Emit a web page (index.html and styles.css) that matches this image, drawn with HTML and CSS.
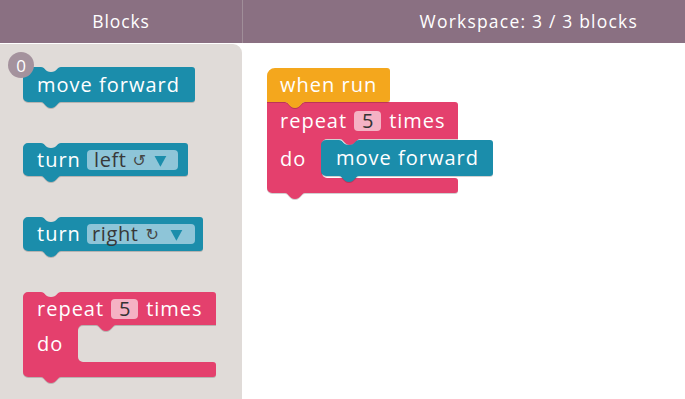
FILE: index.html
```html
<!DOCTYPE html>
<html>
<head>
<meta charset="utf-8">
<link rel="stylesheet" href="styles.css">
</head>
<body>
<div class="app">
  <div class="head head-blocks">Blocks</div>
  <div class="head head-ws">Workspace: 3 / 3 blocks</div>

  <aside class="flyout">
    <div class="block teal b-move">
      <svg class="shape" width="172" height="35" viewBox="0 0 172 35"><path d="M0,5 a5,5 0 0 1 5,-5 H18 c4,0 4,5 10,5 c6,0 6,-5 10,-5 H169 a3,3 0 0 1 3,3 V32 a3,3 0 0 1 -3,3 H38 c-4,0 -4,6 -10,6 c-6,0 -6,-6 -10,-6 H5 a5,5 0 0 1 -5,-5 Z"/></svg>
      <span class="label">move forward</span>
      <span class="badge">0</span>
    </div>

    <div class="block teal b-left">
      <svg class="shape" width="165" height="33" viewBox="0 0 165 33"><path d="M0,5 a5,5 0 0 1 5,-5 H18 c4,0 4,5 10,5 c6,0 6,-5 10,-5 H162 a3,3 0 0 1 3,3 V30 a3,3 0 0 1 -3,3 H38 c-4,0 -4,6 -10,6 c-6,0 -6,-6 -10,-6 H5 a5,5 0 0 1 -5,-5 Z"/></svg>
      <span class="label">turn</span>
      <span class="dropdown dd-left"><span class="dd-text">left</span><span class="rot">↺</span><span class="tri">▼</span></span>
    </div>

    <div class="block teal b-right">
      <svg class="shape" width="180" height="34" viewBox="0 0 180 34"><path d="M0,5 a5,5 0 0 1 5,-5 H18 c4,0 4,5 10,5 c6,0 6,-5 10,-5 H177 a3,3 0 0 1 3,3 V31 a3,3 0 0 1 -3,3 H38 c-4,0 -4,6 -10,6 c-6,0 -6,-6 -10,-6 H5 a5,5 0 0 1 -5,-5 Z"/></svg>
      <span class="label">turn</span>
      <span class="dropdown dd-right"><span class="dd-text">right</span><span class="rot">↻</span><span class="tri">▼</span></span>
    </div>

    <div class="cblock pink fly-repeat">
      <svg class="shape" width="193" height="85" viewBox="0 0 193 85"><path d="M0,5 a5,5 0 0 1 5,-5 H18 c4,0 4,5 10,5 c6,0 6,-5 10,-5 H190 a3,3 0 0 1 3,3 V33 H93 c-4,0 -4,6 -10,6 c-6,0 -6,-6 -10,-6 H60 a5,5 0 0 0 -5,5 V65 a5,5 0 0 0 5,5 H190 a3,3 0 0 1 3,3 V82 a3,3 0 0 1 -3,3 H38 c-4,0 -4,6 -10,6 c-6,0 -6,-6 -10,-6 H5 a5,5 0 0 1 -5,-5 Z"/></svg>
      <div class="row row-top"><span class="label">repeat</span><span class="num">5</span><span class="label">times</span></div>
      <div class="row row-do"><span class="label">do</span></div>
      <div class="row row-foot"></div>
    </div>
  </aside>

  <main class="workspace">
    <div class="stack">
      <div class="block orange b-run">
        <svg class="shape" width="123" height="34" viewBox="0 0 123 34"><path d="M0,8 a8,8 0 0 1 8,-8 H120 a3,3 0 0 1 3,3 V31 a3,3 0 0 1 -3,3 H38 c-4,0 -4,6 -10,6 c-6,0 -6,-6 -10,-6 H0 Z"/></svg>
        <span class="label">when run</span>
      </div>
      <div class="cblock pink ws-repeat">
        <svg class="shape" width="191" height="91" viewBox="0 0 191 91"><path d="M0,0 H18 c4,0 4,5 10,5 c6,0 6,-5 10,-5 H188 a3,3 0 0 1 3,3 V37 H93 c-4,0 -4,6 -10,6 c-6,0 -6,-6 -10,-6 H60 a5,5 0 0 0 -5,5 V71 a5,5 0 0 0 5,5 H188 a3,3 0 0 1 3,3 V88 a3,3 0 0 1 -3,3 H38 c-4,0 -4,6 -10,6 c-6,0 -6,-6 -10,-6 H5 a5,5 0 0 1 -5,-5 Z"/></svg>
        <div class="row row-top"><span class="label">repeat</span><span class="num">5</span><span class="label">times</span></div>
        <div class="row row-do">
          <span class="label">do</span>
          <div class="block teal b-inner">
            <svg class="shape" width="172" height="36" viewBox="0 0 172 36"><path d="M0,5 a5,5 0 0 1 5,-5 H18 c4,0 4,5 10,5 c6,0 6,-5 10,-5 H169 a3,3 0 0 1 3,3 V33 a3,3 0 0 1 -3,3 H38 c-4,0 -4,6 -10,6 c-6,0 -6,-6 -10,-6 H5 a5,5 0 0 1 -5,-5 Z"/></svg>
            <span class="label">move forward</span>
          </div>
        </div>
        <div class="row row-foot"></div>
      </div>
    </div>
  </main>
</div>
</body>
</html>
```

FILE: styles.css
```css
* { box-sizing: border-box; }

html, body {
  margin: 0;
  padding: 0;
  background: #ffffff;
}

body {
  font-family: "Open Sans", "Lato", sans-serif;
  width: 685px;
  height: 399px;
  overflow: hidden;
}

.app {
  display: grid;
  grid-template-columns: 243px 1fr;
  grid-template-rows: 43px 1fr;
  height: 399px;
}

.head {
  background: #8a7082;
  color: #ffffff;
  font-size: 17.5px;
  letter-spacing: 0.9px;
  display: flex;
  align-items: center;
  padding-bottom: 1px;
}

.head-blocks {
  justify-content: center;
  border-right: 1px solid #a08e99;
}

.head-ws {
  justify-content: flex-end;
  padding-right: 47px;
  letter-spacing: 1.2px;
}

.flyout {
  background: #e0dbd8;
  border-top-right-radius: 9px;
  margin-top: 1px;
  margin-right: 1px;
  padding: 23px 0 0 23px;
  display: flex;
  flex-direction: column;
  align-items: flex-start;
  gap: 41px;
}

.workspace {
  position: relative;
  background: #ffffff;
}

.stack {
  position: absolute;
  left: 24px;
  top: 25px;
  display: flex;
  flex-direction: column;
}

/* blocks */
.block, .cblock {
  position: relative;
  z-index: 0;
  color: #ffffff;
  font-size: 20px;
  letter-spacing: 1px;
}

.block {
  display: flex;
  align-items: center;
  padding-left: 14px;
}

.shape {
  position: absolute;
  left: 0;
  top: 0;
  z-index: -1;
  overflow: visible;
  filter: drop-shadow(0.5px 1.5px 0 rgba(0, 0, 0, 0.18));
}

.teal > .shape { fill: #1b8dab; }
.pink > .shape { fill: #e4406d; }
.orange > .shape { fill: #f4a71d; }

.label {
  line-height: 1;
  white-space: nowrap;
}

.b-move { width: 172px; height: 35px; padding-left: 14px; }
.b-left { width: 165px; height: 33px; }
.b-right { width: 180px; height: 34px; }

.badge {
  position: absolute;
  left: -15px;
  top: -15px;
  width: 26px;
  height: 26px;
  border-radius: 50%;
  background: #a4929d;
  color: #ffffff;
  font-size: 17px;
  letter-spacing: 0;
  display: flex;
  align-items: center;
  justify-content: center;
  line-height: 1;
}

.dropdown {
  position: absolute;
  left: 64px;
  top: 50%;
  transform: translateY(-50%);
  height: 20px;
  padding: 0 0 0 7px;
  border-radius: 4px;
  background: #8ec5d8;
  color: #383838;
  display: flex;
  align-items: center;
  line-height: 1;
  white-space: nowrap;
}

.dd-left { width: 91px; }
.dd-right { width: 108px; padding-left: 5px; }

.dd-text { letter-spacing: 0.6px; }

.rot {
  font-family: "DejaVu Sans", sans-serif;
  font-size: 16px;
  letter-spacing: 0;
  color: #454545;
  margin-left: 6px;
  margin-top: 2px;
}

.dd-right .rot { margin-left: 7px; }

.tri {
  font-family: "DejaVu Sans", sans-serif;
  font-size: 14px;
  letter-spacing: 0;
  color: #1b8dab;
  margin-left: 9px;
  transform: scaleX(1.1);
}

.dd-right .tri { margin-left: 12px; }

.num {
  margin: 0 8px 0 7px;
  width: 27px;
  height: 20px;
  border-radius: 4px;
  background: #f5b2c4;
  color: #333333;
  letter-spacing: 0;
  display: flex;
  align-items: center;
  justify-content: center;
  line-height: 1;
}

.cblock .row {
  display: flex;
  align-items: center;
  padding-left: 14px;
}

.fly-repeat { width: 193px; }
.fly-repeat .row-top { height: 33px; }
.fly-repeat .row-do { height: 37px; }
.fly-repeat .row-foot { height: 15px; }

.b-run { width: 123px; height: 34px; z-index: 2; padding-left: 13px; }

.ws-repeat { width: 191px; z-index: 1; }
.ws-repeat .row { padding-left: 13px; }
.ws-repeat .row-top { height: 37px; }
.ws-repeat .row-do { height: 39px; align-items: flex-start; }
.ws-repeat .row-do > .label { margin-top: 10px; }
.ws-repeat .row-foot { height: 15px; }

.b-inner {
  position: absolute;
  left: 54px;
  top: 38px;
  width: 172px;
  height: 36px;
  padding-left: 15px;
}
```
